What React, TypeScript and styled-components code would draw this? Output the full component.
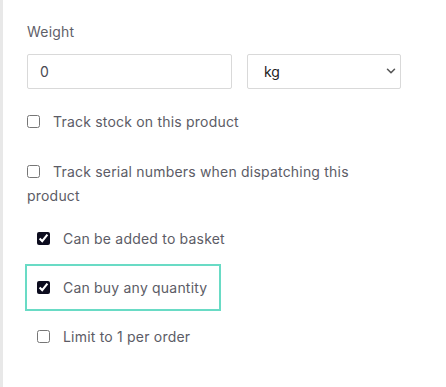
import styled, { createGlobalStyle } from 'styled-components';
import { ChevronDown } from 'lucide-react';

const GlobalStyle = createGlobalStyle`
  html, body {
    margin: 0;
    padding: 0;
    background: #ffffff;
  }
  body {
    font-family: Inter, "Noto Sans", sans-serif;
  }
`;

const Page = styled.div`
  display: flex;
  min-height: 387px;
`;

const Rail = styled.div`
  width: 3px;
  flex-shrink: 0;
  background: #e8e8e8;
`;

const Content = styled.div`
  flex: 1;
  padding: 22px 45px 0 24px;
  letter-spacing: 0.2px;
`;

const FieldLabel = styled.div`
  font-size: 14px;
  line-height: 20px;
  color: #5f5f69;
  margin-bottom: 12px;
`;

const WeightRow = styled.div`
  display: grid;
  grid-template-columns: 205px 154px;
  gap: 15px;
  margin-bottom: 21px;
`;

const TextInput = styled.input`
  box-sizing: border-box;
  height: 35px;
  width: 100%;
  border: 1px solid #d9d9d9;
  border-radius: 2px;
  padding: 0 12px;
  font-family: inherit;
  font-size: 14px;
  color: #4a4a52;
  background: #fff;
  outline: none;
`;

const SelectWrap = styled.div`
  position: relative;
`;

const UnitSelect = styled.select`
  appearance: none;
  box-sizing: border-box;
  height: 35px;
  width: 100%;
  border: 1px solid #d9d9d9;
  border-radius: 2px;
  padding: 0 24px 0 16px;
  font-family: inherit;
  font-size: 14px;
  color: #222;
  background: #fff;
  outline: none;
`;

const Chevron = styled(ChevronDown)`
  position: absolute;
  right: 3px;
  top: 10px;
  color: #555;
  pointer-events: none;
`;

const Option = styled.label<{ $gap: number }>`
  display: block;
  font-size: 14px;
  line-height: 24px;
  color: #5c5c66;
  margin-top: ${(p) => p.$gap}px;
`;

const Box = styled.input`
  width: 13px;
  height: 13px;
  margin: 0 13px 0 0;
  vertical-align: -1px;
  accent-color: #0c0c1e;
`;

const Group = styled.div`
  display: flex;
  flex-direction: column;
  align-items: flex-start;
  gap: 2px;
  margin: 7px 0 0 -2px;
`;

const GroupItem = styled.label<{ $focused?: boolean }>`
  display: flex;
  align-items: center;
  height: 47px;
  box-sizing: border-box;
  padding: 0 12px 0 10px;
  border: 2px solid ${(p) => (p.$focused ? '#69dbc5' : 'transparent')};
  font-size: 14px;
  color: #5c5c66;
`;

const items = [
  { text: 'Can be added to basket', checked: true },
  { text: 'Can buy any quantity', checked: true, focused: true },
  { text: 'Limit to 1 per order', checked: false },
];

const App = () => {
  return (
    <>
      <GlobalStyle />
      <Page>
        <Rail />
        <Content>
          <FieldLabel>Weight</FieldLabel>
          <WeightRow>
            <TextInput defaultValue="0" />
            <SelectWrap>
              <UnitSelect defaultValue="kg">
                <option value="kg">kg</option>
                <option value="g">g</option>
                <option value="lb">lb</option>
              </UnitSelect>
              <Chevron size={14} strokeWidth={2.6} />
            </SelectWrap>
          </WeightRow>
          <Option $gap={0}>
            <Box type="checkbox" />
            Track stock on this product
          </Option>
          <Option $gap={26}>
            <Box type="checkbox" />
            Track serial numbers when dispatching this product
          </Option>
          <Group>
            {items.map((it) => (
              <GroupItem key={it.text} $focused={it.focused}>
                <Box type="checkbox" defaultChecked={it.checked} />
                {it.text}
              </GroupItem>
            ))}
          </Group>
        </Content>
      </Page>
    </>
  );
};

export default App;
